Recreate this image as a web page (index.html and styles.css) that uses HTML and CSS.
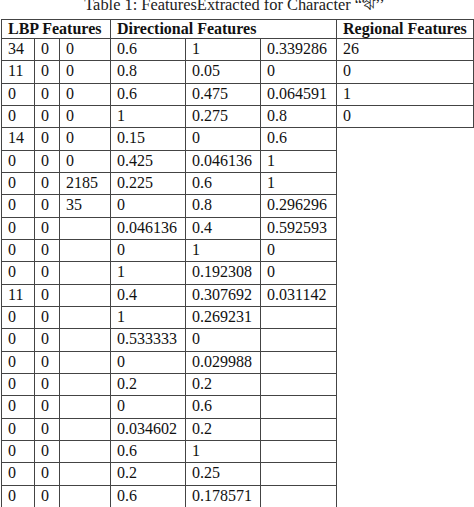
FILE: index.html
```html
<!DOCTYPE html>
<html>
<head>
<meta charset="utf-8">
<link rel="stylesheet" href="styles.css">
</head>
<body>
<p class="caption">Table 1: FeaturesExtracted for Character “ঋ’’</p>
<table class="features">
<colgroup>
<col class="c1"><col class="c2"><col class="c3"><col class="c4"><col class="c5"><col class="c6"><col class="c7">
</colgroup>
<thead>
<tr><th colspan="3">LBP Features</th><th colspan="3">Directional Features</th><th>Regional Features</th></tr>
</thead>
<tbody>
<tr><td>34</td><td>0</td><td>0</td><td>0.6</td><td>1</td><td>0.339286</td><td>26</td></tr>
<tr><td>11</td><td>0</td><td>0</td><td>0.8</td><td>0.05</td><td>0</td><td>0</td></tr>
<tr><td>0</td><td>0</td><td>0</td><td>0.6</td><td>0.475</td><td>0.064591</td><td>1</td></tr>
<tr><td>0</td><td>0</td><td>0</td><td>1</td><td>0.275</td><td>0.8</td><td>0</td></tr>
<tr><td>14</td><td>0</td><td>0</td><td>0.15</td><td>0</td><td>0.6</td></tr>
<tr><td>0</td><td>0</td><td>0</td><td>0.425</td><td>0.046136</td><td>1</td></tr>
<tr><td>0</td><td>0</td><td>2185</td><td>0.225</td><td>0.6</td><td>1</td></tr>
<tr><td>0</td><td>0</td><td>35</td><td>0</td><td>0.8</td><td>0.296296</td></tr>
<tr><td>0</td><td>0</td><td></td><td>0.046136</td><td>0.4</td><td>0.592593</td></tr>
<tr><td>0</td><td>0</td><td></td><td>0</td><td>1</td><td>0</td></tr>
<tr><td>0</td><td>0</td><td></td><td>1</td><td>0.192308</td><td>0</td></tr>
<tr><td>11</td><td>0</td><td></td><td>0.4</td><td>0.307692</td><td>0.031142</td></tr>
<tr><td>0</td><td>0</td><td></td><td>1</td><td>0.269231</td><td></td></tr>
<tr><td>0</td><td>0</td><td></td><td>0.533333</td><td>0</td><td></td></tr>
<tr><td>0</td><td>0</td><td></td><td>0</td><td>0.029988</td><td></td></tr>
<tr><td>0</td><td>0</td><td></td><td>0.2</td><td>0.2</td><td></td></tr>
<tr><td>0</td><td>0</td><td></td><td>0</td><td>0.6</td><td></td></tr>
<tr><td>0</td><td>0</td><td></td><td>0.034602</td><td>0.2</td><td></td></tr>
<tr><td>0</td><td>0</td><td></td><td>0.6</td><td>1</td><td></td></tr>
<tr><td>0</td><td>0</td><td></td><td>0.2</td><td>0.25</td><td></td></tr>
<tr><td>0</td><td>0</td><td></td><td>0.6</td><td>0.178571</td><td></td></tr>
</tbody>
</table>
</body>
</html>
```

FILE: styles.css
```css
html, body {
  margin: 0;
  padding: 0;
  background: #ffffff;
}
body {
  font-family: "Liberation Serif", "Times New Roman", serif;
  color: #111111;
  overflow: hidden;
}
.caption {
  margin: -4px 0 0 0;
  padding-right: 5px;
  height: 23px;
  font-size: 16.4px;
  line-height: 18px;
  text-align: center;
  color: #222222;
}
.features {
  margin-left: 1px;
  border-collapse: collapse;
  table-layout: fixed;
  width: 472px;
  font-size: 16px;
}
.c1 { width: 33px; }
.c2 { width: 25px; }
.c3 { width: 51px; }
.c4 { width: 75px; }
.c5 { width: 75px; }
.c6 { width: 76px; }
.c7 { width: 137px; }
.features th,
.features td {
  border: 1px solid #444444;
  padding: 0 0 0 6px;
  text-align: left;
  vertical-align: middle;
  white-space: nowrap;
  line-height: 18px;
}
.features th {
  height: 17.5px;
  font-weight: bold;
}
.features td {
  height: 20.33px;
  padding-bottom: 1px;
}
```
